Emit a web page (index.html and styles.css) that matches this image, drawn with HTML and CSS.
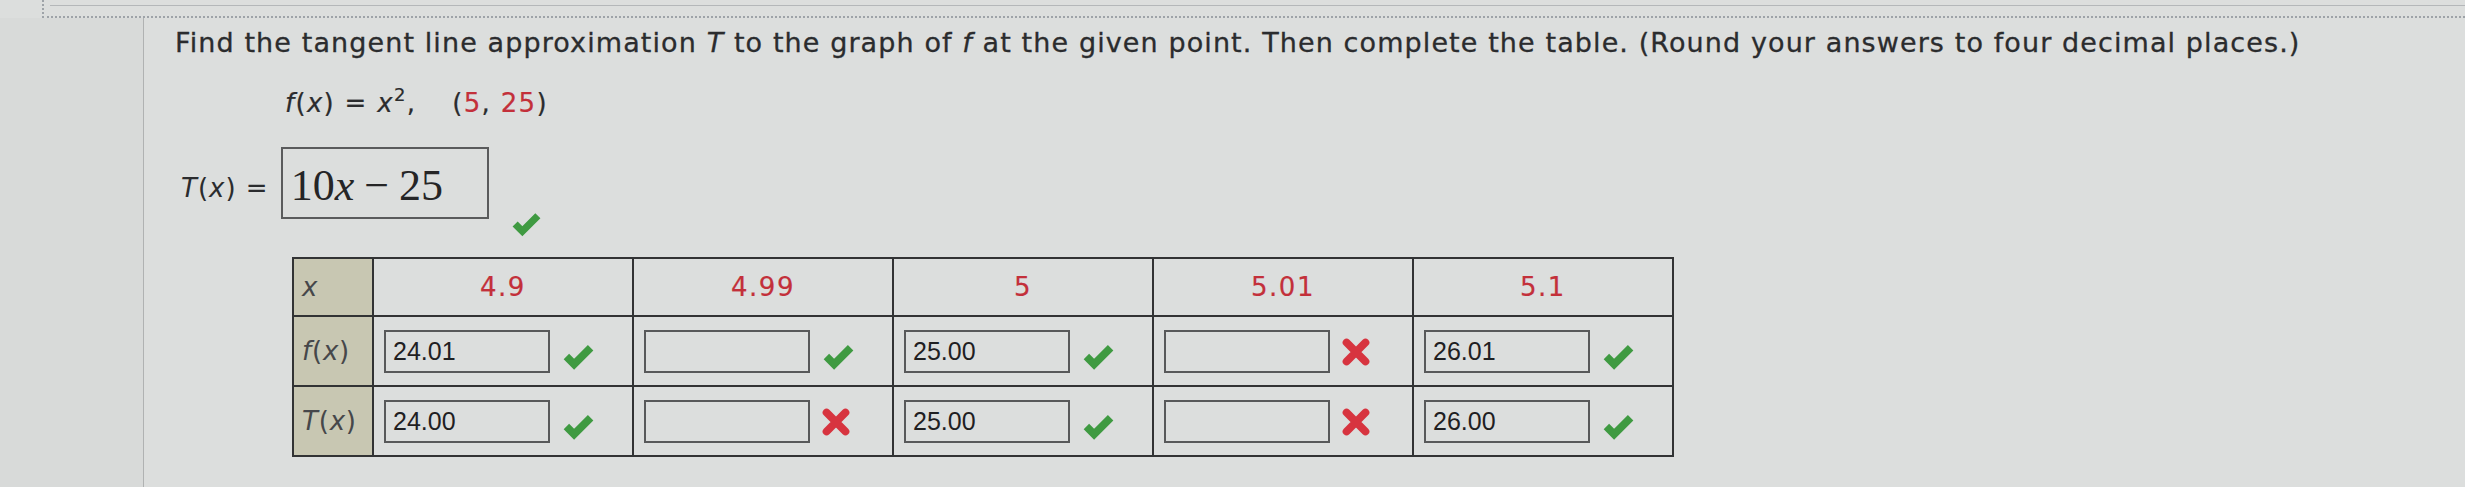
FILE: index.html
```html
<!DOCTYPE html>
<html>
<head>
<meta charset="utf-8">
<title>Tangent line approximation</title>
<link rel="stylesheet" href="styles.css">
</head>
<body>
<div class="topbar"><div class="topline"></div></div>
<div class="main">
  <div class="gutter"></div>
  <div class="content">
    <p class="prompt">Find the tangent line approximation <i>T</i> to the graph of <i>f</i> at the given point. Then complete the table. (Round your answers to four decimal places.)</p>
    <p class="given"><i>f</i>(<i>x</i>) = <i>x</i><sup>2</sup>,<span class="gap"></span>(<span class="red">5</span>, <span class="red">25</span>)</p>
    <div class="answer">
      <span class="lbl"><i>T</i>(<i>x</i>) =</span>
      <div class="mathbox"><span class="math">10<i>x</i><span class="op">−</span>25</span></div>
      <svg class="check big" viewBox="0 0 30 25"><path d="M4 13 L11 20 L26 5" /></svg>
    </div>
    <table class="grid">
      <colgroup><col class="c0"><col class="cv"><col class="cv"><col class="cv"><col class="cv"><col class="cv"></colgroup>
      <tr class="hdr">
        <th class="lab"><i>x</i></th>
        <th class="val">4.9</th>
        <th class="val">4.99</th>
        <th class="val">5</th>
        <th class="val">5.01</th>
        <th class="val">5.1</th>
      </tr>
      <tr class="r1">
        <th class="lab"><i>f</i>(<i>x</i>)</th>
        <td><div class="cell"><div class="inp">24.01</div><svg class="check" viewBox="0 0 30 25"><path d="M4 13 L11 20 L26 5" /></svg></div></td>
        <td><div class="cell"><div class="inp"></div><svg class="check" viewBox="0 0 30 25"><path d="M4 13 L11 20 L26 5" /></svg></div></td>
        <td><div class="cell"><div class="inp">25.00</div><svg class="check" viewBox="0 0 30 25"><path d="M4 13 L11 20 L26 5" /></svg></div></td>
        <td><div class="cell"><div class="inp"></div><svg class="cross" viewBox="0 0 27 27"><path d="M5 5 L22 22 M22 5 L5 22" /></svg></div></td>
        <td><div class="cell"><div class="inp">26.01</div><svg class="check" viewBox="0 0 30 25"><path d="M4 13 L11 20 L26 5" /></svg></div></td>
      </tr>
      <tr class="r2">
        <th class="lab"><i>T</i>(<i>x</i>)</th>
        <td><div class="cell"><div class="inp">24.00</div><svg class="check" viewBox="0 0 30 25"><path d="M4 13 L11 20 L26 5" /></svg></div></td>
        <td><div class="cell"><div class="inp"></div><svg class="cross" viewBox="0 0 27 27"><path d="M5 5 L22 22 M22 5 L5 22" /></svg></div></td>
        <td><div class="cell"><div class="inp">25.00</div><svg class="check" viewBox="0 0 30 25"><path d="M4 13 L11 20 L26 5" /></svg></div></td>
        <td><div class="cell"><div class="inp"></div><svg class="cross" viewBox="0 0 27 27"><path d="M5 5 L22 22 M22 5 L5 22" /></svg></div></td>
        <td><div class="cell"><div class="inp">26.00</div><svg class="check" viewBox="0 0 30 25"><path d="M4 13 L11 20 L26 5" /></svg></div></td>
      </tr>
    </table>
  </div>
</div>
</body>
</html>
```

FILE: styles.css
```css
html, body {
  margin: 0;
  padding: 0;
}
body {
  background: #dcdedd;
  font-family: "DejaVu Sans", Verdana, sans-serif;
  color: #2b2c2e;
  width: 2465px;
  height: 487px;
  overflow: hidden;
}
.topbar {
  margin-left: 42px;
  height: 18px;
  box-sizing: border-box;
  border-left: 2px dotted #9ea3a8;
  border-bottom: 2px dotted #9ea3a8;
  padding-top: 5px;
  padding-left: 6px;
}
.topline {
  border-top: 1px solid #b4b7b9;
}
.main {
  display: flex;
  height: 469px;
}
.gutter {
  width: 143px;
  flex: none;
  background: #d8dad9;
  border-right: 1px solid #b0b2b2;
}
.content {
  padding-left: 31px;
  flex: 1;
}
.prompt {
  margin: 9px 0 0;
  font-size: 27px;
  line-height: 31px;
  letter-spacing: 1.1px;
  white-space: nowrap;
  -webkit-text-stroke: 0.3px #2b2c2e;
}
.given {
  margin: 30px 0 0 110px;
  font-size: 26px;
  line-height: 30px;
  letter-spacing: 1.3px;
  white-space: nowrap;
  -webkit-text-stroke: 0.2px #2b2c2e;
}
.given sup {
  font-size: 18px;
  line-height: 0;
  vertical-align: 11px;
}
.gap {
  display: inline-block;
  width: 36px;
}
.red {
  color: #c3303a;
  -webkit-text-stroke: 0.2px #c3303a;
}
.answer {
  display: flex;
  align-items: center;
  margin-top: 29px;
  margin-left: 6px;
}
.lbl {
  font-size: 26px;
  letter-spacing: 1px;
  padding-top: 9px;
  white-space: nowrap;
}
.mathbox {
  margin-left: 12px;
  width: 208px;
  height: 72px;
  box-sizing: border-box;
  border: 2px solid #5a5b5c;
  display: flex;
  align-items: center;
  padding-left: 8px;
  padding-top: 4px;
  font-family: "Liberation Serif", "Times New Roman", serif;
  font-size: 44px;
  color: #252526;
}
.math .op {
  margin: 0 10px;
}
.check path {
  fill: none;
  stroke: #3f9a41;
  stroke-width: 7;
  stroke-linejoin: miter;
}
.cross path {
  fill: none;
  stroke: #d7343f;
  stroke-width: 7;
  stroke-linecap: round;
}
.check {
  width: 33px;
  height: 28px;
  flex: none;
  margin-left: 12px;
  margin-top: 9px;
}
.check.big {
  width: 31px;
  height: 27px;
  align-self: flex-end;
  margin-left: 22px;
  margin-bottom: -18px;
  margin-top: 0;
}
.cross {
  width: 30px;
  height: 30px;
  flex: none;
  margin-left: 11px;
  margin-top: 2px;
}
.grid {
  margin-top: 38px;
  margin-left: 117px;
  border-collapse: collapse;
  table-layout: fixed;
  width: 1382px;
}
.grid col.c0 {
  width: 80px;
}
.grid col.cv {
  width: 260px;
}
.grid th, .grid td {
  border: 2px solid #323334;
  padding: 0;
}
.grid tr.hdr {
  height: 58px;
}
.grid tr.r1 {
  height: 70px;
}
.grid tr.r2 {
  height: 70px;
}
.lab {
  background: #c8c7b2;
  font-weight: normal;
  text-align: left;
  padding-left: 8px !important;
  font-size: 26px;
  letter-spacing: 0.8px;
  color: #46474a;
  white-space: nowrap;
}
.val {
  color: #c3303a;
  font-weight: normal;
  font-size: 26px;
  letter-spacing: 1.5px;
  text-align: center;
  -webkit-text-stroke: 0.2px #c3303a;
}
.cell {
  display: flex;
  align-items: center;
  padding-left: 10px;
}
.inp {
  width: 166px;
  height: 43px;
  flex: none;
  box-sizing: border-box;
  border: 2px solid #58595a;
  padding-left: 7px;
  display: flex;
  align-items: center;
  font-family: "Liberation Sans", Arial, sans-serif;
  font-size: 25px;
  color: #1f2022;
}
```
